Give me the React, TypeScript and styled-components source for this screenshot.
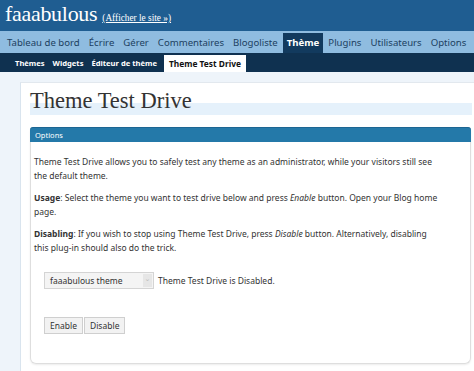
import styled, { createGlobalStyle } from "styled-components";

const GlobalStyle = createGlobalStyle`
  html, body {
    margin: 0;
    padding: 0;
    background: #ffffff;
  }
  body {
    font-family: "Noto Sans", "DejaVu Sans", sans-serif;
    color: #333333;
  }
`;

const mainMenu = [
  "Tableau de bord",
  "Écrire",
  "Gérer",
  "Commentaires",
  "Blogoliste",
  "Thème",
  "Plugins",
  "Utilisateurs",
  "Options",
];

const subMenu = ["Thèmes", "Widgets", "Éditeur de thème", "Theme Test Drive"];

const App = () => {
  return (
    <Page>
      <GlobalStyle />
      <Header>
        <BlogName>faaabulous</BlogName>
        <ViewSite href="#">(Afficher le site »)</ViewSite>
      </Header>

      <MainNav>
        {mainMenu.map((item) => (
          <MainItem key={item} $active={item === "Thème"}>
            {item}
          </MainItem>
        ))}
      </MainNav>

      <SubNav>
        {subMenu.map((item) => (
          <SubItem key={item} $active={item === "Theme Test Drive"}>
            {item}
          </SubItem>
        ))}
      </SubNav>

      <Body>
        <Wrap>
          <Title>Theme Test Drive</Title>
          <Box>
            <BoxHead>Options</BoxHead>
            <BoxInner>
              <Para>
                Theme Test Drive allows you to safely test any theme as an administrator, while your visitors still see
                <br />
                the default theme.
              </Para>
              <Para>
                <b>Usage</b>: Select the theme you want to test drive below and press <i>Enable</i> button. Open your Blog home
                <br />
                page.
              </Para>
              <Para>
                <b>Disabling</b>: If you wish to stop using Theme Test Drive, press <i>Disable</i> button. Alternatively, disabling
                <br />
                this plug-in should also do the trick.
              </Para>

              <SelectRow>
                <FakeSelect>
                  faaabulous theme
                  <SelectArrow>⌄</SelectArrow>
                </FakeSelect>
                <Status>Theme Test Drive is Disabled.</Status>
              </SelectRow>

              <ButtonRow>
                <Button>Enable</Button>
                <Button>Disable</Button>
              </ButtonRow>
            </BoxInner>
          </Box>
        </Wrap>
      </Body>
    </Page>
  );
};

export default App;

const Page = styled.div`
  width: 474px;
  height: 371px;
  overflow: hidden;
  display: flex;
  flex-direction: column;
`;

const Header = styled.div`
  height: 31px;
  background: #1f5d91;
  display: flex;
  align-items: baseline;
  padding: 0 0 0 5px;
  box-sizing: border-box;
`;

const BlogName = styled.h1`
  margin: 0;
  font-family: "Liberation Serif", serif;
  font-weight: normal;
  font-size: 22px;
  line-height: 28px;
  color: #ffffff;
  letter-spacing: -0.3px;
`;

const ViewSite = styled.a`
  margin-left: 5px;
  font-family: "Liberation Serif", serif;
  font-size: 9.3px;
  color: #ffffff;
  text-decoration: underline;
`;

const MainNav = styled.div`
  height: 22px;
  background: #8fbce0;
  display: flex;
  align-items: flex-end;
  gap: 1px;
  padding-left: 3px;
`;

const MainItem = styled.div<{ $active?: boolean }>`
  height: 20px;
  line-height: 20px;
  padding: 0 4px;
  font-size: 9.6px;
  white-space: nowrap;
  color: ${(p) => (p.$active ? "#ffffff" : "#1c3f60")};
  background: ${(p) => (p.$active ? "#123a5e" : "transparent")};
  font-weight: ${(p) => (p.$active ? "bold" : "normal")};
`;

const SubNav = styled.div`
  height: 19px;
  background: #0f3150;
  display: flex;
  align-items: flex-end;
  padding-left: 11px;
`;

const SubItem = styled.div<{ $active?: boolean }>`
  height: 17px;
  line-height: 17px;
  padding: ${(p) => (p.$active ? "0 5px" : "0 4px")};
  margin-left: ${(p) => (p.$active ? "3px" : "0")};
  font-size: ${(p) => (p.$active ? "8.4px" : "7.6px")};
  font-weight: bold;
  white-space: nowrap;
  color: ${(p) => (p.$active ? "#111111" : "#ffffff")};
  background: ${(p) => (p.$active ? "#ffffff" : "transparent")};
`;

const Body = styled.div`
  flex: 1;
  background: #eef4fa;
  padding: 10px 0 0 20px;
  display: flex;
`;

const Wrap = styled.div`
  flex: 1;
  background: #ffffff;
  border-left: 1px solid #d9e4ee;
  border-top: 1px solid #e2e8ee;
  padding: 0 2px 0 9px;
`;

const Title = styled.h2`
  margin: 0;
  padding: 7px 0 0 0;
  height: 33px;
  box-sizing: border-box;
  font-family: "Liberation Serif", serif;
  font-weight: normal;
  font-size: 22.5px;
  line-height: 22px;
  color: #333333;
  background: linear-gradient(to bottom, transparent 0, transparent 20px, #e5f1fb 20px, #e5f1fb 32px, transparent 32px);
`;

const Box = styled.div`
  margin-top: 11px;
  width: 439px;
  height: 236px;
  border: 1px solid #dedede;
  border-top: none;
  border-radius: 4px 4px 6px 6px;
  box-shadow: 0 1px 2px rgba(0, 0, 0, 0.08);
  display: flex;
  flex-direction: column;
`;

const BoxHead = styled.div`
  height: 15px;
  line-height: 15px;
  background: #2479a9;
  border-top: 1px solid #1c6592;
  border-radius: 3px 3px 0 0;
  box-sizing: border-box;
  margin: 0 -1px;
  padding-left: 5px;
  font-size: 7.5px;
  color: #ffffff;
`;

const BoxInner = styled.div`
  padding: 13px 0 0 3px;
  display: flex;
  flex-direction: column;
`;

const Para = styled.p`
  margin: 0 0 8px 0;
  font-size: 8.5px;
  line-height: 14px;
  white-space: nowrap;
  color: #333333;
`;

const SelectRow = styled.div`
  display: flex;
  align-items: center;
  gap: 4px;
  margin: 9px 0 0 10px;
`;

const FakeSelect = styled.div`
  width: 110px;
  height: 17px;
  box-sizing: border-box;
  border: 1px solid #d4d4d4;
  background: #f4f4f4;
  font-size: 8.5px;
  line-height: 15px;
  padding-left: 5px;
  color: #333333;
  position: relative;
`;

const SelectArrow = styled.span`
  position: absolute;
  right: 1px;
  top: 1px;
  width: 9px;
  height: 13px;
  background: #e6e6e6;
  color: #bbbbbb;
  font-size: 7px;
  line-height: 10px;
  text-align: center;
`;

const Status = styled.span`
  font-size: 8.5px;
  color: #333333;
`;

const ButtonRow = styled.div`
  display: flex;
  gap: 1px;
  margin: 28px 0 0 10px;
`;

const Button = styled.button`
  height: 17px;
  padding: 0 5px;
  font-family: "Noto Sans", "DejaVu Sans", sans-serif;
  font-size: 8.5px;
  line-height: 15px;
  color: #333333;
  background: #f2f2f2;
  border: 1px solid #cfcfcf;
  border-radius: 0;
`;
